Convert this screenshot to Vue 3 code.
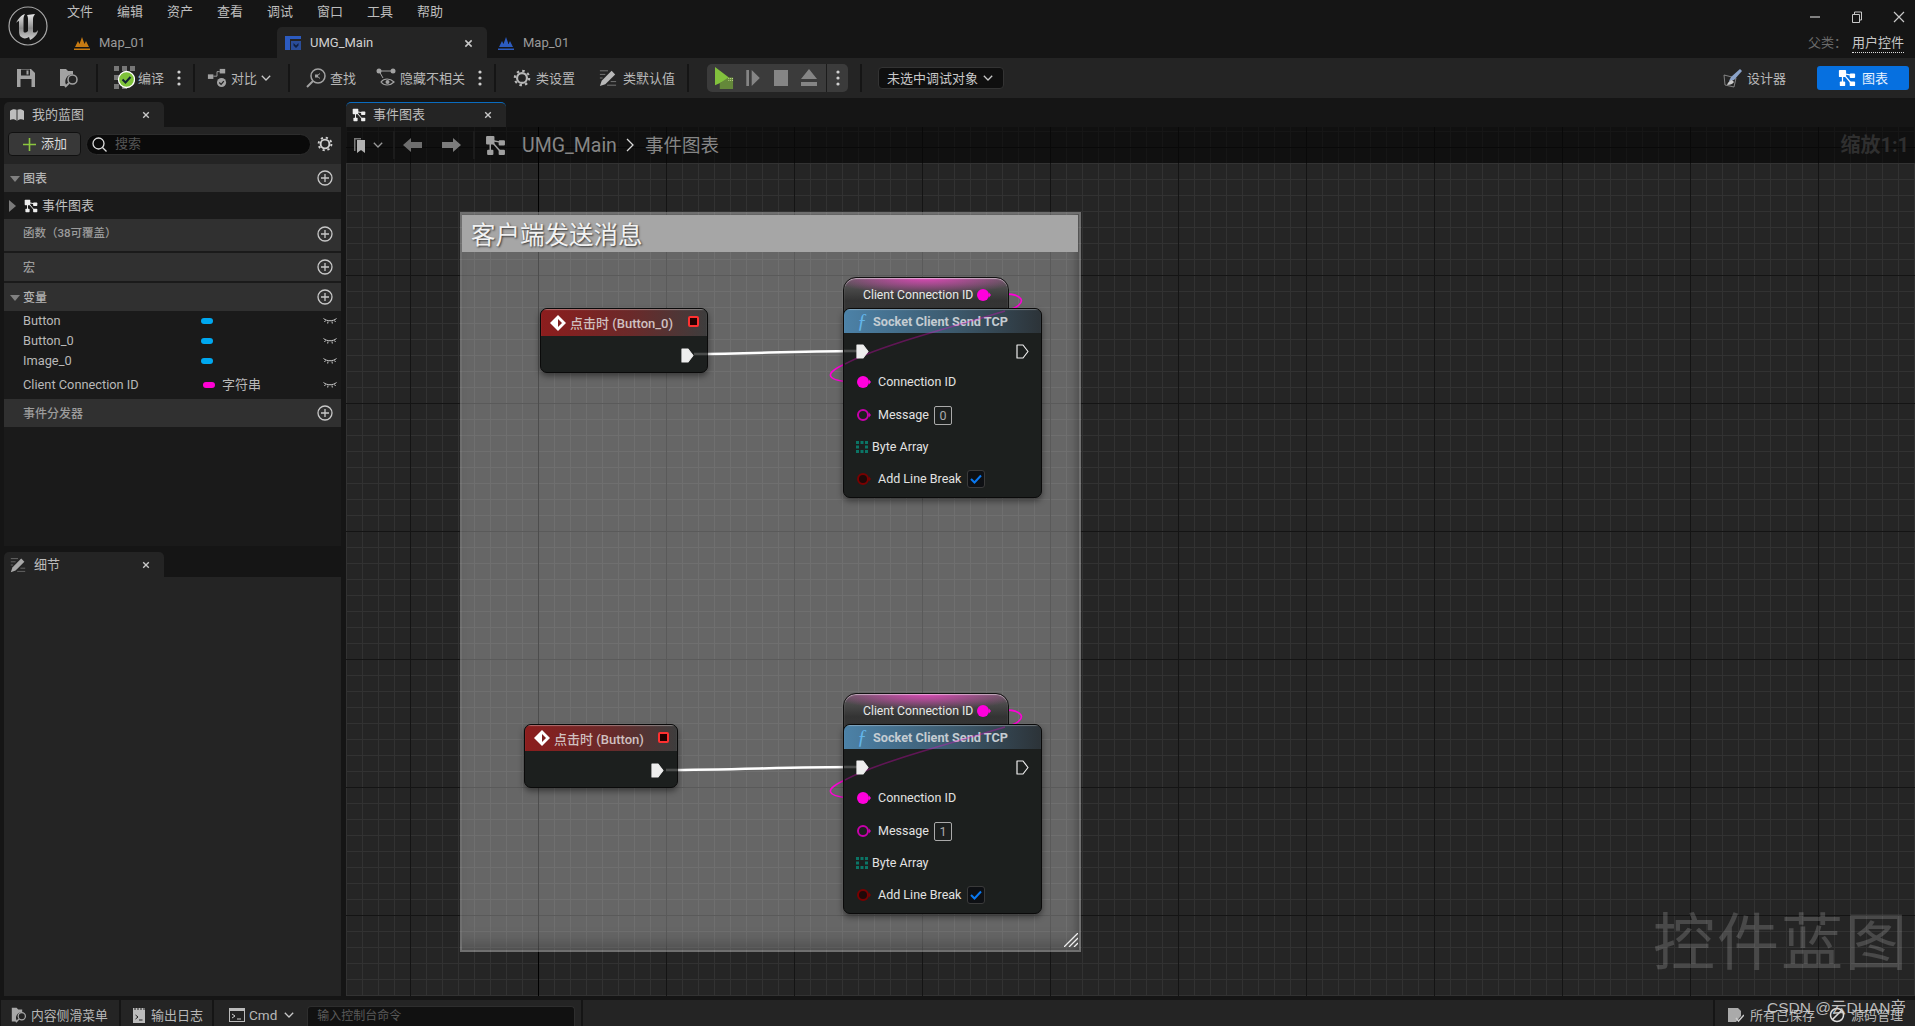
<script setup>
const menus = ['文件', '编辑', '资产', '查看', '调试', '窗口', '工具', '帮助']
const eventNodes = [
  { title: '点击时 (Button_0)', x: 194, y: 181, w: 168, h: 65, head: 27 },
  { title: '点击时 (Button)', x: 178, y: 597, w: 154, h: 64, head: 26 }
]
const funcNodes = [
  { y: 181, value: '0', dy: 0, sx: 690 },
  { y: 597, value: '1', dy: 416, sx: 662 }
]
const vars = [
  { name: 'Button', color: 'blue' },
  { name: 'Button_0', color: 'blue' },
  { name: 'Image_0', color: 'blue' }
]
</script>

<template>
  <div class="app">
    <svg class="defs" width="0" height="0">
      <defs>
        <linearGradient id="ue-g" x1="0" y1="0" x2="0" y2="1">
          <stop offset="0" stop-color="#e8e8e8" />
          <stop offset=".55" stop-color="#8c8c8c" />
          <stop offset="1" stop-color="#d0d0d0" />
        </linearGradient>
      </defs>
      <symbol id="i-graph" viewBox="0 0 20 20">
        <path d="M5 5L16 7M5 5L5 16" stroke="currentColor" stroke-width="1.4" fill="none" />
        <rect x="1" y="1" width="8" height="8" rx="1" fill="currentColor" />
        <rect x="13" y="5" width="6" height="5" rx="1" fill="currentColor" />
        <rect x="2" y="14" width="6" height="5" rx="1" fill="currentColor" />
        <path d="M8 8L14 15" stroke="currentColor" stroke-width="1.4" />
        <rect x="13" y="14" width="6" height="5" rx="1" fill="currentColor" />
      </symbol>
      <symbol id="i-save" viewBox="0 0 20 20">
        <path fill-rule="evenodd" d="M1 1h14l4 4v14H1zM5 1.500v6h9v-6zM10.500 2.500h2v4h-2zM4.500 11v8h11v-8z" fill="currentColor" />
      </symbol>
      <symbol id="i-browse" viewBox="0 0 20 20">
        <path d="M1 1h6l2 2h5v3.500a7 7 0 0 0-6 11.500H1z" fill="currentColor" />
        <circle cx="13.500" cy="11.500" r="4.500" fill="none" stroke="currentColor" stroke-width="1.500" />
        <path d="M10 15l-4 4" stroke="currentColor" stroke-width="1.800" />
      </symbol>
      <symbol id="i-gear" viewBox="0 0 20 20">
        <circle cx="10" cy="10" r="5.500" fill="none" stroke="currentColor" stroke-width="2.400" />
        <circle cx="10" cy="10" r="8" fill="none" stroke="currentColor" stroke-width="2.400" stroke-dasharray="2.800 3.480" />
      </symbol>
      <symbol id="i-pencil" viewBox="0 0 20 20">
        <path d="M1 19l2-6L14 2l4 4L7 17z" fill="currentColor" />
        <path d="M1 2h9M1 6h6M1 10h3M9 18h10M13 14h6" stroke="currentColor" stroke-width="1" opacity=".6" />
      </symbol>
      <symbol id="i-plus" viewBox="0 0 16 16">
        <circle cx="8" cy="8" r="7" fill="none" stroke="currentColor" stroke-width="1.300" />
        <path d="M8 4v8M4 8h8" stroke="currentColor" stroke-width="1.300" />
      </symbol>
      <symbol id="i-dots" viewBox="0 0 4 18">
        <circle cx="2" cy="3" r="1.600" fill="currentColor" />
        <circle cx="2" cy="9" r="1.600" fill="currentColor" />
        <circle cx="2" cy="15" r="1.600" fill="currentColor" />
      </symbol>
      <symbol id="i-close" viewBox="0 0 10 10">
        <path d="M1.500 1.500l7 7M8.500 1.500l-7 7" stroke="currentColor" stroke-width="1.700" />
      </symbol>
      <symbol id="i-chev" viewBox="0 0 10 6">
        <path d="M.8 .8L5 5l4.200-4.200" stroke="currentColor" stroke-width="1.300" fill="none" />
      </symbol>
      <symbol id="i-eye" viewBox="0 0 14 8">
        <path d="M.5 1.500C4 4.500 10 4.500 13.500 1.500M2.500 3.500L1.500 5M5 4.500L4.700 6.500M9 4.500L9.300 6.500M11.500 3.500L12.500 5" stroke="currentColor" stroke-width="1" fill="none" />
      </symbol>
      <symbol id="i-map" viewBox="0 0 18 18">
        <path d="M2 13L5 7l1.500 3L9 3l2.500 7L13 7l3 6z" fill="currentColor" />
        <rect x="1" y="14.500" width="16" height="1.500" fill="currentColor" />
      </symbol>
      <symbol id="i-exec" viewBox="0 0 13 15">
        <path d="M1 1h6l5 6.500L7 14H1z" fill="currentColor" stroke="currentColor" stroke-width="1.200" stroke-linejoin="round" />
      </symbol>
      <symbol id="i-exec-o" viewBox="0 0 13 15">
        <path d="M1 1h6l5 6.500L7 14H1z" fill="none" stroke="currentColor" stroke-width="1.200" stroke-linejoin="round" />
      </symbol>
    </svg>

    <header class="titlebar">
      <div class="logo-wrap">
        <svg class="logo" viewBox="0 0 40 40">
          <circle cx="20" cy="20" r="19" fill="#161616" stroke="#a8a8a8" stroke-width="1.200" />
          <path d="M8 17C10 13 13 9 17 8C16 10 15.500 11 15.500 13L15.500 25C15.500 27 18 27 20 25L20 13C20 11 19.500 10 19 9C22 9 24 8 27 8C26 9.500 25 11 25 13L25 26C26 27 28 27 30 24C30 28 26 32 22 34L21 31C18 33 15 33 12 30C11 28 11 25 11 22L11 15C10 15 9 16 8 17Z" fill="url(#ue-g)" />
        </svg>
      </div>
      <div class="title-main">
        <nav class="menu">
          <span v-for="m in menus" :key="m">{{ m }}</span>
        </nav>
        <div class="doc-tabs">
          <div class="doc-tab">
            <svg class="ic18 orange"><use href="#i-map" /></svg>
            <span>Map_01</span>
          </div>
          <div class="doc-tab active">
            <svg class="ic18 blue" viewBox="0 0 18 18">
              <path d="M1 2h16v3H6v11H1z" fill="currentColor" />
              <path d="M7 7h10v9H7z" fill="currentColor" opacity=".75" />
              <path d="M9.500 9l2.500 2.500L14.500 9v2.500L12 14l-2.500-2.500z" fill="#102040" />
            </svg>
            <span>UMG_Main</span>
            <svg class="x"><use href="#i-close" /></svg>
          </div>
          <div class="doc-tab third">
            <svg class="ic18 blue"><use href="#i-map" /></svg>
            <span>Map_01</span>
          </div>
        </div>
      </div>
      <div class="title-right">
        <div class="win">
          <svg viewBox="0 0 12 12" class="win-i"><path d="M1 6h10" stroke="currentColor" stroke-width="1.200" /></svg>
          <svg viewBox="0 0 12 12" class="win-i"><path d="M1.500 3.500h7v8h-7zM3.500 3.500v-2.500h7v8h-2" stroke="currentColor" fill="none" stroke-width="1" /></svg>
          <svg viewBox="0 0 12 12" class="win-i"><path d="M1 1l10 10M11 1L1 11" stroke="currentColor" stroke-width="1.200" /></svg>
        </div>
        <div class="parent"><span class="p-label">父类：</span><span class="p-val">用户控件</span></div>
      </div>
    </header>

    <div class="toolbar">
      <div class="seg s1">
        <svg class="ic20"><use href="#i-save" /></svg>
        <svg class="ic20"><use href="#i-browse" /></svg>
      </div>
      <div class="seg s2">
        <svg class="ic21" viewBox="0 0 21 24">
          <g fill="#777">
            <rect x="0" y="0" width="5" height="5" /><rect x="8" y="0" width="5" height="5" /><rect x="16" y="0" width="5" height="5" />
            <rect x="0" y="9" width="5" height="5" /><rect x="0" y="18" width="5" height="5" /><rect x="8" y="18" width="5" height="5" />
          </g>
          <circle cx="12.500" cy="13.500" r="8" fill="#7ec23a" stroke="#fff" stroke-width="1.300" />
          <path d="M8.500 13.500l3 3 5-5.500" stroke="#123" stroke-width="2" fill="none" />
        </svg>
        <span>编译</span>
        <svg class="dots m9"><use href="#i-dots" /></svg>
      </div>
      <div class="seg s3">
        <svg class="ic20" viewBox="0 0 20 22">
          <rect x="0" y="7" width="6" height="5" fill="currentColor" />
          <rect x="13" y="1" width="6" height="5" fill="currentColor" />
          <path d="M6 9h4V4h3" stroke="currentColor" fill="none" />
          <circle cx="15" cy="16" r="5" fill="currentColor" />
          <path d="M12.500 16l2 2 3-3.500" stroke="#222" stroke-width="1.400" fill="none" />
        </svg>
        <span>对比</span>
        <svg class="chev"><use href="#i-chev" /></svg>
      </div>
      <div class="seg s4">
        <svg class="ic20" viewBox="0 0 20 20">
          <circle cx="12" cy="8" r="7" fill="none" stroke="currentColor" stroke-width="1.500" />
          <path d="M7 13L1 19" stroke="currentColor" stroke-width="2" />
          <rect x="9" y="6.500" width="3" height="3" fill="currentColor" />
          <path d="M11 8l3-2.500M11 8l3 2.500" stroke="currentColor" />
        </svg>
        <span>查找</span>
        <svg class="ic20 m16" viewBox="0 0 20 20">
          <circle cx="3" cy="3" r="2.500" fill="currentColor" />
          <circle cx="17" cy="3" r="2.500" fill="currentColor" />
          <path d="M3 3h14M3 3l4 7" stroke="currentColor" />
          <path d="M5 14c3-4 9-4 13 0-4 4-10 4-13 0z" fill="none" stroke="currentColor" stroke-width="1.200" />
          <circle cx="11.500" cy="14" r="2" fill="currentColor" />
        </svg>
        <span>隐藏不相关</span>
        <svg class="dots m9"><use href="#i-dots" /></svg>
      </div>
      <div class="seg s5">
        <svg class="ic18"><use href="#i-gear" /></svg>
        <span class="m1">类设置</span>
        <svg class="ic18 m24"><use href="#i-pencil" /></svg>
        <span class="m2">类默认值</span>
      </div>
      <div class="seg s6">
        <div class="play">
          <svg class="ic-play" viewBox="0 0 20 24">
            <path d="M0 0l16 12L0 19z" fill="#82c13d" />
            <path d="M5 23v-6l9-6h5v12z" fill="#64883a" />
            <path d="M14 12h5M14 14h5" stroke="#c8e090" stroke-dasharray="1 1" />
          </svg>
          <svg class="ic-play i2" viewBox="0 0 16 20"><path d="M0 1h3v18H0zM6 1l9 9-9 9z" fill="#858585" /></svg>
          <i class="stop"></i>
          <svg class="ic-play i4" viewBox="0 0 18 18"><path d="M9 0l8 10H1zM1 13h16v4H1z" fill="#858585" /></svg>
          <i class="pdiv"></i>
          <svg class="dots pd"><use href="#i-dots" /></svg>
        </div>
      </div>
      <div class="seg s7">
        <div class="debug"><span>未选中调试对象</span><svg class="chev"><use href="#i-chev" /></svg></div>
      </div>
      <div class="designer">
        <svg class="ic20" viewBox="0 0 20 20">
          <path d="M1 7l12 3-2 9-9-2z" fill="none" stroke="#999" stroke-width=".8" />
          <path d="M6 13l2-4L17 1l2 2-8 9z" fill="#8aa2c8" />
          <path d="M4 17c1-3 3-5 5-5l2 2c-1 2-4 3-7 3z" fill="#ccc" />
        </svg>
        <span>设计器</span>
      </div>
      <div class="graph-btn">
        <svg class="ic18 white"><use href="#i-graph" /></svg>
        <span>图表</span>
      </div>
    </div>

    <main class="body">
      <aside class="left">
        <div class="panel-tab-row">
          <div class="panel-tab">
            <svg class="ic14" viewBox="0 0 14 14"><path d="M0 3c2-2 5-2 7-1 2-1 5-1 7 1v9c-2-1-5-1-7 1-2-2-5-2-7-1z" fill="#bdbdbd" /><path d="M7 2v11" stroke="#333" /></svg>
            <span>我的蓝图</span>
            <svg class="x"><use href="#i-close" /></svg>
          </div>
        </div>
        <section class="bp-panel">
          <div class="bp-tools">
            <div class="add"><svg class="add-plus" viewBox="0 0 13 13"><path d="M6.500 0v13M0 6.500h13" stroke="#8cc63f" stroke-width="1.600" /></svg><span>添加</span></div>
            <div class="search">
              <svg class="s-ic" viewBox="0 0 15 15"><circle cx="6.500" cy="6.500" r="5.500" fill="none" stroke="#ddd" stroke-width="1.300" /><path d="M10.500 10.500l4 4" stroke="#ddd" stroke-width="1.300" /></svg>
              <span>搜索</span>
            </div>
            <svg class="ic16 tool-gear"><use href="#i-gear" /></svg>
          </div>
          <div class="sec"><i class="tri-d"></i><b>图表</b><svg class="plus"><use href="#i-plus" /></svg></div>
          <div class="graph-row"><i class="tri-r"></i><svg class="ic14 wh"><use href="#i-graph" /></svg><span>事件图表</span></div>
          <div class="sec tall nt"><b class="fn-label">函数（38可覆盖）</b><svg class="plus"><use href="#i-plus" /></svg></div>
          <div class="sec nt"><b>宏</b><svg class="plus"><use href="#i-plus" /></svg></div>
          <div class="sec"><i class="tri-d"></i><b>变量</b><svg class="plus"><use href="#i-plus" /></svg></div>
          <div class="vars">
            <div v-for="v in vars" :key="v.name" class="var">
              <span class="vname">{{ v.name }}</span>
              <i class="pill"></i>
              <svg class="eye"><use href="#i-eye" /></svg>
            </div>
            <div class="var last">
              <span class="vname">Client Connection ID</span>
              <i class="pill mag"></i><span class="vtype">字符串</span>
              <svg class="eye"><use href="#i-eye" /></svg>
            </div>
          </div>
          <div class="sec nt"><b>事件分发器</b><svg class="plus"><use href="#i-plus" /></svg></div>
        </section>
        <div class="panel-tab-row second">
          <div class="panel-tab">
            <svg class="ic16"><use href="#i-pencil" /></svg>
            <span>细节</span>
            <svg class="x"><use href="#i-close" /></svg>
          </div>
        </div>
        <section class="detail-panel"></section>
      </aside>

      <section class="center">
        <div class="panel-tab-row">
          <div class="panel-tab graph-tab">
            <svg class="ic14 wh"><use href="#i-graph" /></svg>
            <span>事件图表</span>
            <svg class="x"><use href="#i-close" /></svg>
          </div>
        </div>
        <div class="canvas">
          <div class="crumbs">
            <svg class="bm" viewBox="0 0 11 15"><path d="M0 0h7v1.500H1.500V13H0z" fill="#777" /><path d="M3 2h8v13l-4-3-4 3z" fill="#b0b0b0" /></svg>
            <svg class="chev c1"><use href="#i-chev" /></svg>
            <i class="c-bar b1"></i>
            <svg class="arrow" viewBox="0 0 19 14"><path d="M8 0L0 7l8 7v-4h11V4H8z" fill="#6e6e6e" /></svg>
            <svg class="arrow a2" viewBox="0 0 19 14"><path d="M11 0l8 7-8 7v-4H0V4h11z" fill="#7c7c7c" /></svg>
            <i class="c-bar b2"></i>
            <svg class="crumb-g"><use href="#i-graph" /></svg>
            <span class="c-text t1">UMG_Main</span>
            <svg class="c-sep" viewBox="0 0 8 14"><path d="M1 1l6 6-6 6" fill="none" stroke="#d8d8d8" stroke-width="1.300" /></svg>
            <span class="c-text t2">事件图表</span>
            <span class="zoom">缩放1:1</span>
          </div>

          <div class="comment">
            <div class="comment-title">客户端发送消息</div>
            <svg class="grip" viewBox="0 0 14 14"><path d="M0 14L14 0M5 14L14 5M10 14l4-4" stroke="#eee" stroke-width="1.300" /></svg>
          </div>

          <svg class="wires" viewBox="346 127 1569 869">
            <g v-for="f in funcNodes" :key="f.dy" :transform="`translate(0,${f.dy})`" fill="none">
              <path d="M988 295C1028 290 1030 305 1005 311C960 325 880 345 845 364C818 376 832 382 858 382" stroke="#ff00d8" stroke-width="1.600" />
            </g>
            <path d="M690 354C760 354 780 351 860 351" stroke="#fff" stroke-width="2.600" fill="none" />
            <path d="M662 770C740 770 780 767 860 767" stroke="#fff" stroke-width="2.600" fill="none" />
          </svg>

          <div v-for="f in funcNodes" :key="'v' + f.dy" class="var-node" :style="{ top: f.y - 31 + 'px' }">
            <span>Client Connection ID</span>
            <svg class="pin" viewBox="0 0 15 14"><circle cx="7" cy="7" r="6" fill="#ff00dc" /><path d="M13 4.500L15 7l-2 2.500z" fill="#ff00dc" /></svg>
          </div>

          <div
            v-for="n in eventNodes"
            :key="n.title"
            class="node event"
            :style="{ left: n.x + 'px', top: n.y + 'px', width: n.w + 'px', height: n.h + 'px' }"
          >
            <div class="ev-head" :style="{ height: n.head + 'px' }">
              <svg class="diamond" viewBox="0 0 16 16"><path d="M8 0l8 8-8 8-8-8z" fill="#fff" /><path d="M8 4l4 4-4 4z" fill="#7d2020" /></svg>
              <span>{{ n.title }}</span>
              <i class="red-sq"></i>
            </div>
            <div class="ev-body"><svg class="exec wh"><use href="#i-exec" /></svg></div>
          </div>

          <div v-for="f in funcNodes" :key="'f' + f.dy" class="node func" :style="{ top: f.y + 'px' }">
            <div class="fn-head"><em>ƒ</em><span>Socket Client Send TCP</span></div>
            <div class="row between">
              <svg class="exec wh"><use href="#i-exec" /></svg>
              <svg class="exec wh"><use href="#i-exec-o" /></svg>
            </div>
            <div class="row c">
              <svg class="pin" viewBox="0 0 15 14"><circle cx="7" cy="7" r="6" fill="#ff00dc" /><path d="M13 4.500L15 7l-2 2.500z" fill="#ff00dc" /></svg>
              <span>Connection ID</span>
            </div>
            <div class="row">
              <svg class="pin" viewBox="0 0 15 14"><circle cx="7" cy="7" r="5" fill="none" stroke="#c800ac" stroke-width="2" /><path d="M13 4.500L15 7l-2 2.500z" fill="#c800ac" /></svg>
              <span>Message</span>
              <i class="val">{{ f.value }}</i>
            </div>
            <div class="row">
              <svg class="arr" viewBox="0 0 12 12"><path d="M0 0h3v3H0zM4.500 0h3v3h-3zM9 0h3v3H9zM0 4.500h3v3H0zM9 4.500h3v3H9zM0 9h3v3H0zM4.500 9h3v3h-3zM9 9h3v3H9z" fill="#0b7566" /></svg>
              <span>Byte Array</span>
            </div>
            <div class="row">
              <svg class="pin" viewBox="0 0 15 14"><circle cx="7" cy="7" r="5" fill="#200808" stroke="#7a0000" stroke-width="2" /><path d="M13 4.500L15 7l-2 2.500z" fill="#7a0000" /></svg>
              <span>Add Line Break</span>
              <i class="check"><svg viewBox="0 0 12 10"><path d="M1 5l3.500 3.500L11 1.500" fill="none" stroke="#0a78f0" stroke-width="2" /></svg></i>
            </div>
          </div>

          <svg class="wires top" viewBox="346 127 1569 869">
            <g v-for="f in funcNodes" :key="'o' + f.dy" :transform="`translate(0,${f.dy})`" fill="none">
              <path d="M1005 311C960 325 880 345 845 364" stroke="#ff00d8" stroke-width="1.600" opacity=".3" />
            </g>
            <path d="M694 354h14" stroke="#fff" stroke-width="2.600" opacity=".2" />
            <path d="M666 770h12" stroke="#fff" stroke-width="2.600" opacity=".2" />
            <path d="M844 351h14" stroke="#fff" stroke-width="2.600" opacity=".2" />
            <path d="M844 767h14" stroke="#fff" stroke-width="2.600" opacity=".2" />
          </svg>

          <div class="mark">控件蓝图</div>
        </div>
      </section>
    </main>

    <footer class="footer">
      <div class="f-item f1">
        <svg class="ic16"><use href="#i-browse" /></svg><span>内容侧滑菜单</span>
      </div>
      <div class="f-item f2">
        <svg class="log" viewBox="0 0 12 16"><path d="M0 1h12v15H0z" fill="#bbb" /><path d="M2 0v3M5 0v3M8 0v3M11 0v3" stroke="#222" /><path d="M2.500 8l2.500 2-2.500 2M6 13h3.500" stroke="#222" fill="none" /></svg>
        <span>输出日志</span>
      </div>
      <div class="f-item f3">
        <svg class="cmd" viewBox="0 0 16 14"><path d="M0 0h16v14H0z" fill="#bbb" /><path d="M1 3h14v10H1z" fill="#222" /><path d="M3 6l3 2-3 2M8 11h4" stroke="#ccc" fill="none" /></svg>
        <span class="cmd-t">Cmd</span>
        <svg class="chev"><use href="#i-chev" /></svg>
        <div class="console">输入控制台命令</div>
      </div>
      <div class="f-item f4"></div>
      <div class="f-item f5">
        <svg class="ic16" viewBox="0 0 16 16"><path d="M0 1h10l3 3v5l-5 6H0z" fill="#aaa" /><path d="M8 11l2.500 3L16 8" stroke="#ccc" stroke-width="1.500" fill="none" /></svg>
        <span>所有已保存</span>
        <svg class="ic16 no" viewBox="0 0 16 16"><circle cx="8" cy="8" r="6.500" fill="none" stroke="#ddd" stroke-width="1.500" /><path d="M3.500 12.500l9-9" stroke="#ddd" stroke-width="1.500" /></svg>
        <span>源码管理</span>
      </div>
    </footer>
    <div class="csdn">CSDN @云DUAN帝</div>
  </div>
</template>

<style>
html, body { margin: 0; background: #151515; }
</style>

<style scoped>
.app {
  position: relative;
  width: 1915px;
  height: 1026px;
  overflow: hidden;
  background: #151515;
  color: #c0c0c0;
  font-family: Roboto, "Noto Sans CJK SC", sans-serif;
  font-size: 13px;
  display: flex;
  flex-direction: column;
}
.defs { position: absolute; }
i, em { font-style: normal; display: block; flex: none; }
svg { flex: none; display: block; }

.titlebar { height: 58px; display: flex; flex: none; }
.logo-wrap { width: 66px; padding: 6px 0 0 8px; box-sizing: border-box; flex: none; }
.logo { width: 40px; height: 40px; }
.title-main { flex: 1; display: flex; flex-direction: column; }
.menu { height: 27px; display: flex; gap: 24px; padding: 3px 0 0 1px; box-sizing: border-box; line-height: 18px; color: #bdbdbd; }
.doc-tabs { display: flex; height: 31px; }
.doc-tab { width: 211px; display: flex; align-items: center; gap: 8px; padding-left: 7px; box-sizing: border-box; color: #9a9a9a; position: relative; }
.doc-tab.active { width: 210px; background: #242424; border-radius: 5px 5px 0 0; color: #d0d0d0; }
.doc-tab.third { padding-left: 10px; }
.ic18 { width: 18px; height: 18px; }
.orange { color: #c77a12; }
.blue { color: #2c5bc0; }
.white { color: #fff; }
.x { width: 9px; height: 9px; color: #c8c8c8; position: absolute; right: 14px; top: 50%; margin-top: -4px; }

.title-right { width: 120px; display: flex; flex-direction: column; flex: none; }
.win { display: flex; gap: 30px; padding: 11px 0 0 14px; height: 28px; box-sizing: border-box; color: #c8c8c8; }
.win-i { width: 12px; height: 12px; }
.parent { display: flex; gap: 9px; padding: 5px 0 0 13px; line-height: 19px; }
.p-label { color: #6a6a6a; width: 35px; white-space: nowrap; }
.p-val { color: #c8c8c8; border-bottom: 1px dotted #ddd; height: 19px; }

.toolbar { height: 40px; flex: none; background: #242424; display: flex; align-items: center; color: #b8b8b8; }
.toolbar span { margin-bottom: 2px; }
.seg { display: flex; align-items: center; gap: 4px; height: 100%; box-sizing: border-box; flex: none; position: relative; }
.seg + .seg::before { content: ""; position: absolute; left: -1px; top: 6px; bottom: 6px; width: 2px; background: #151515; }
.ic20 { width: 20px; height: 20px; color: #a2a2a2; }
.ic21 { width: 21px; height: 24px; }
.dots { width: 4px; height: 18px; color: #cfcfcf; }
.chev { width: 10px; height: 6px; color: #c8c8c8; }
.s1 { width: 97px; padding-left: 16px; gap: 23px; }
.s2 { width: 97px; padding-left: 17px; }
.s2 span { margin-left: -1px; }
.m9 { margin-left: 9px; }
.s3 { width: 95px; padding-left: 13px; }
.s4 { width: 206px; padding-left: 17px; }
.m16 { margin-left: 16px; }
.s5 { width: 193px; padding-left: 18px; }
.m1 { margin-left: 1px; }
.m2 { margin-left: 2px; }
.m24 { margin-left: 20px; }
.s6 { width: 173px; padding-left: 19px; }
.play { width: 141px; height: 28px; background: #3b3b3b; border-radius: 5px; display: flex; align-items: center; padding-left: 8px; box-sizing: border-box; }
.ic-play { width: 19px; height: 23px; }
.i2 { width: 15px; height: 18px; margin-left: 12px; }
.stop { width: 14px; height: 16px; background: #858585; margin-left: 13px; }
.i4 { width: 18px; height: 18px; margin-left: 12px; }
.pdiv { width: 1px; height: 28px; background: #1c1c1c; margin-left: 8px; }
.pd { margin-left: 9px; color: #d0d0d0; }
.s7 { padding-left: 17px; width: 862px; }
.debug { width: 126px; height: 22px; background: #0f0f0f; border: 1px solid #333; border-radius: 4px; box-sizing: border-box; display: flex; align-items: center; gap: 5px; padding-left: 8px; white-space: nowrap; color: #c8c8c8; }
.designer { display: flex; align-items: center; gap: 4px; width: 94px; flex: none; }
.graph-btn { width: 92px; height: 24px; background: #0670e0; border-radius: 3px; display: flex; align-items: center; gap: 6px; padding-left: 21px; box-sizing: border-box; color: #e8f2ff; flex: none; }

.body { flex: none; height: 894px; margin-top: 4px; display: flex; }
.left { width: 337px; margin-left: 4px; flex: none; display: flex; flex-direction: column; }
.panel-tab-row { height: 25px; display: flex; flex: none; }
.panel-tab { width: 160px; background: #242424; border-radius: 5px 5px 0 0; display: flex; align-items: center; gap: 8px; padding-left: 6px; box-sizing: border-box; position: relative; color: #bcbcbc; }
.panel-tab span { margin-bottom: 3px; }
.ic14 { width: 14px; height: 14px; }
.ic16 { width: 16px; height: 16px; color: #a8a8a8; }
.panel-tab .x { right: 14px; width: 8px; height: 8px; }
.wh { color: #eee; }
.bp-panel { height: 419px; background: #1a1a1a; flex: none; }
.bp-tools { height: 37px; background: #242424; display: flex; align-items: center; padding-left: 4px; box-sizing: border-box; }
.add { width: 73px; height: 24px; background: #383838; border: 1px solid #111; border-radius: 4px; display: flex; align-items: center; gap: 5px; padding-left: 14px; box-sizing: border-box; color: #d8d8d8; margin-top: -3px; }
.add span, .search span { margin-bottom: 3px; }
.add-plus { width: 13px; height: 13px; }
.search { width: 225px; height: 21px; margin: -3px 0 0 5px; background: #0a0a0a; border: 1px solid #2d2d2d; border-radius: 11px; display: flex; align-items: center; gap: 8px; padding-left: 5px; box-sizing: border-box; color: #555; }
.s-ic { width: 15px; height: 15px; }
.tool-gear { margin: -3px 0 0 6px; color: #cfcfcf; }
.sec { height: 28px; background: #303030; display: flex; align-items: center; position: relative; padding: 0 0 2px 19px; box-sizing: border-box; color: #b4b4b4; }
.sec b { font-weight: 500; font-size: 12px; }
.sec.nt { color: #9c9c9c; }
.sec.tall { height: 32px; }
.sec.tall b { margin-top: -4px; }
.sec.tall .plus { top: 7px; }
.fn-label { font-size: 11.500px !important; }
.sec.nt + .sec { margin-top: 2px; }
.tri-d { width: 0; height: 0; border-left: 5px solid transparent; border-right: 5px solid transparent; border-top: 6px solid #808080; position: absolute; left: 6px; top: 12px; }
.tri-r { width: 0; height: 0; border-top: 6px solid transparent; border-bottom: 6px solid transparent; border-left: 7px solid #7a7a7a; margin-right: 4px; }
.plus { width: 16px; height: 16px; color: #c8c8c8; position: absolute; right: 8px; top: 6px; }
.graph-row { height: 27px; display: flex; align-items: center; padding-left: 5px; gap: 4px; color: #c0c0c0; background: #1a1a1a; }
.graph-row span { margin-bottom: 3px; }
.vars { height: 88px; box-sizing: border-box; }
.var { height: 20px; display: flex; align-items: center; padding-left: 19px; position: relative; color: #b8b8b8; font-size: 12.800px; }
.var.last { height: 24px; margin-top: 2px; }
.vname { width: 178px; margin-bottom: 2px; }
.vtype { margin: 0 0 3px 7px; font-size: 13px; }
.pill { width: 12px; height: 6px; border-radius: 3px; background: #00a8f0; }
.pill.mag { background: #ff00d4; margin-left: 2px; }
.eye { width: 14px; height: 8px; color: #c8c8c8; position: absolute; left: 319px; top: 50%; margin-top: -4px; }
.second { margin-top: 6px; }
.detail-panel { flex: 1; background: #242424; }

.center { flex: 1; margin-left: 5px; display: flex; flex-direction: column; min-width: 0; }
.graph-tab { border-top: 1px solid #0a6cc0; gap: 7px; }
.canvas {
  flex: 1;
  position: relative;
  overflow: hidden;
  background-color: #252525;
  background-image:
    linear-gradient(to right, #000 1px, transparent 1px),
    linear-gradient(to right, #141414 1px, transparent 1px),
    linear-gradient(to bottom, #141414 1px, transparent 1px),
    linear-gradient(to right, #323232 1px, transparent 1px),
    linear-gradient(to bottom, #323232 1px, transparent 1px);
  background-size: 1px 100%, 128px 128px, 128px 128px, 16px 16px, 16px 16px;
  background-position: 192px 0, 64px 20px, 64px 20px, 0 4px, 0 4px;
  background-repeat: no-repeat, repeat, repeat, repeat, repeat;
}
.crumbs { height: 36px; background: rgba(0, 0, 0, .55); display: flex; align-items: center; position: relative; padding-left: 8px; color: #8c8c8c; }
.bm { width: 11px; height: 15px; }
.c1 { margin-left: 8px; color: #999; }
.c-bar { width: 2px; height: 28px; background: #1c1c1c; }
.b1 { margin: 0 8px 0 10px; }
.b2 { margin: 0 10px 0 12px; }
.arrow { width: 19px; height: 14px; }
.a2 { margin-left: 20px; }
.crumb-g { width: 21px; height: 21px; color: #a0a0a0; }
.c-text { font-size: 19.500px; line-height: 24px; color: #868686; padding-top: 1px; }
.t1 { margin-left: 16px; }
.t2 { margin-left: 11px; font-size: 18.500px; }
.c-sep { width: 8px; height: 14px; margin-left: 9px; }
.zoom { position: absolute; right: 6px; top: 4px; font-size: 20px; font-weight: 700; color: #2f2f2f; line-height: 28px; }

.comment { position: absolute; left: 114px; top: 85px; width: 621px; height: 740px; box-sizing: border-box; background: rgba(255, 255, 255, .3); border: 2px solid rgba(255, 255, 255, .06); box-shadow: inset 0 -18px 18px -14px rgba(0, 0, 0, .3), inset -10px 0 10px -8px rgba(0, 0, 0, .25); padding: 1px 1px 0 0; }
.comment-title { height: 37px; background: #a6a6a6; color: #f2f2f2; font-size: 24.500px; line-height: 37px; padding: 2px 0 0 9px; box-sizing: border-box; text-shadow: 1px 1px 2px #333; }
.grip { position: absolute; right: 1px; bottom: 3px; width: 14px; height: 14px; }

.wires { position: absolute; left: 0; top: 0; width: 1569px; height: 869px; pointer-events: none; }

.var-node { position: absolute; left: 497px; width: 166px; height: 40px; box-sizing: border-box; border: 1px solid #111; border-radius: 13px 13px 0 0; background: radial-gradient(ellipse 60% 16px at 50% 0, rgba(230, 70, 190, .9), rgba(70, 60, 70, 0) 100%), linear-gradient(#5c5c5c, #333 60%, #3a3a3a); display: flex; align-items: flex-start; padding: 9px 0 0 19px; gap: 3px; color: #e8e8e8; font-size: 12.200px; line-height: 16px; box-shadow: inset 0 1px 1px rgba(255,255,255,.5); }
.pin, .exec { position: relative; z-index: 2; }
.pin { width: 15px; height: 14px; }
.var-node .pin { margin-top: 1px; }

.node { position: absolute; box-sizing: border-box; border: 1px solid #0a0a0a; border-radius: 7px; background: #1c1f1e; box-shadow: 0 3px 6px rgba(0, 0, 0, .45); color: #e6e6e6; overflow: hidden; }
.ev-head { display: flex; align-items: center; padding-left: 9px; gap: 4px; background: linear-gradient(to right, #8c1d1d, #6a2a2a 55%, #3d3d3d); box-shadow: inset 0 1px 1px rgba(255,255,255,.35); font-weight: 500; color: #d0c0c0; font-size: 13px; white-space: nowrap; position: relative; }
.diamond { width: 16px; height: 16px; }
.red-sq { position: absolute; right: 8px; top: 7px; width: 11px; height: 11px; box-sizing: border-box; background: #200; border: 2px solid #ff3030; border-radius: 2px; }
.ev-body { height: 38px; display: flex; align-items: center; justify-content: flex-end; padding-right: 13px; }
.exec { width: 13px; height: 15px; }

.func { left: 497px; width: 199px; height: 190px; padding-bottom: 3px; }
.fn-head { height: 24px; background: linear-gradient(to right, #4c82a8, #3b5668 60%, #2c3338); box-shadow: inset 0 1px 1px rgba(255,255,255,.3); display: flex; align-items: center; padding-left: 13px; gap: 7px; font-weight: 700; font-size: 12.700px; color: #c4ccd2; margin-bottom: 2px; }
.fn-head em { color: #62b4e8; font-family: "Liberation Serif", serif; font-style: italic; font-size: 20px; line-height: 20px; font-weight: 400; width: 9px; }
.row { height: 32px; display: flex; align-items: center; padding: 0 12px; gap: 7px; color: #e2e2e2; font-size: 12.500px; }
.row span { margin-bottom: 1px; }
.row.between { justify-content: space-between; }
.row.c { margin: -1px 0 1px; }
.arr { width: 12px; height: 12px; margin-right: -3px; }
.val { width: 18px; height: 19px; box-sizing: border-box; border: 1px solid #aaa; border-radius: 2px; text-align: center; line-height: 17px; color: #aaa; margin-left: -2px; }
.check { width: 18px; height: 18px; box-sizing: border-box; border: 1px solid #3a3a3a; border-radius: 3px; background: #0e1014; display: flex; align-items: center; justify-content: center; margin-left: -1px; }
.check svg { width: 12px; height: 10px; }

.mark { position: absolute; right: 6px; bottom: 16px; font-size: 62px; line-height: 72px; letter-spacing: 2px; color: rgba(255, 255, 255, .17); white-space: nowrap; }

.footer { height: 26px; margin-top: 4px; flex: none; display: flex; gap: 2px; padding-left: 1px; color: #b8b8b8; }
.f-item { background: #242424; display: flex; align-items: center; gap: 4px; box-sizing: border-box; height: 100%; flex: none; padding-top: 3px; }
.f1 { width: 118px; padding-left: 10px; font-size: 12.800px; }
.f2 { width: 91px; padding-left: 12px; gap: 6px; }
.log { width: 12px; height: 16px; }
.f3 { width: 367px; padding-left: 15px; }
.cmd { width: 16px; height: 14px; }
.cmd-t { margin-right: 3px; font-size: 13.500px; }
.console { width: 268px; height: 20px; align-self: flex-end; margin-left: 9px; background: #111; border: 1px solid #2e2e2e; border-bottom: 0; border-radius: 4px 4px 0 0; padding-left: 9px; box-sizing: border-box; color: #5a5a5a; line-height: 18px; font-size: 12px; }
.f4 { width: 1130px; }
.f5 { flex: 1; padding-left: 13px; gap: 6px; }
.no { margin-left: 8px; }
.csdn { position: absolute; left: 1767px; top: 997px; font-size: 15.500px; line-height: 22px; color: rgba(215, 215, 215, .85); white-space: nowrap; pointer-events: none; font-family: "Liberation Sans", "Noto Sans CJK SC", sans-serif; }
</style>
